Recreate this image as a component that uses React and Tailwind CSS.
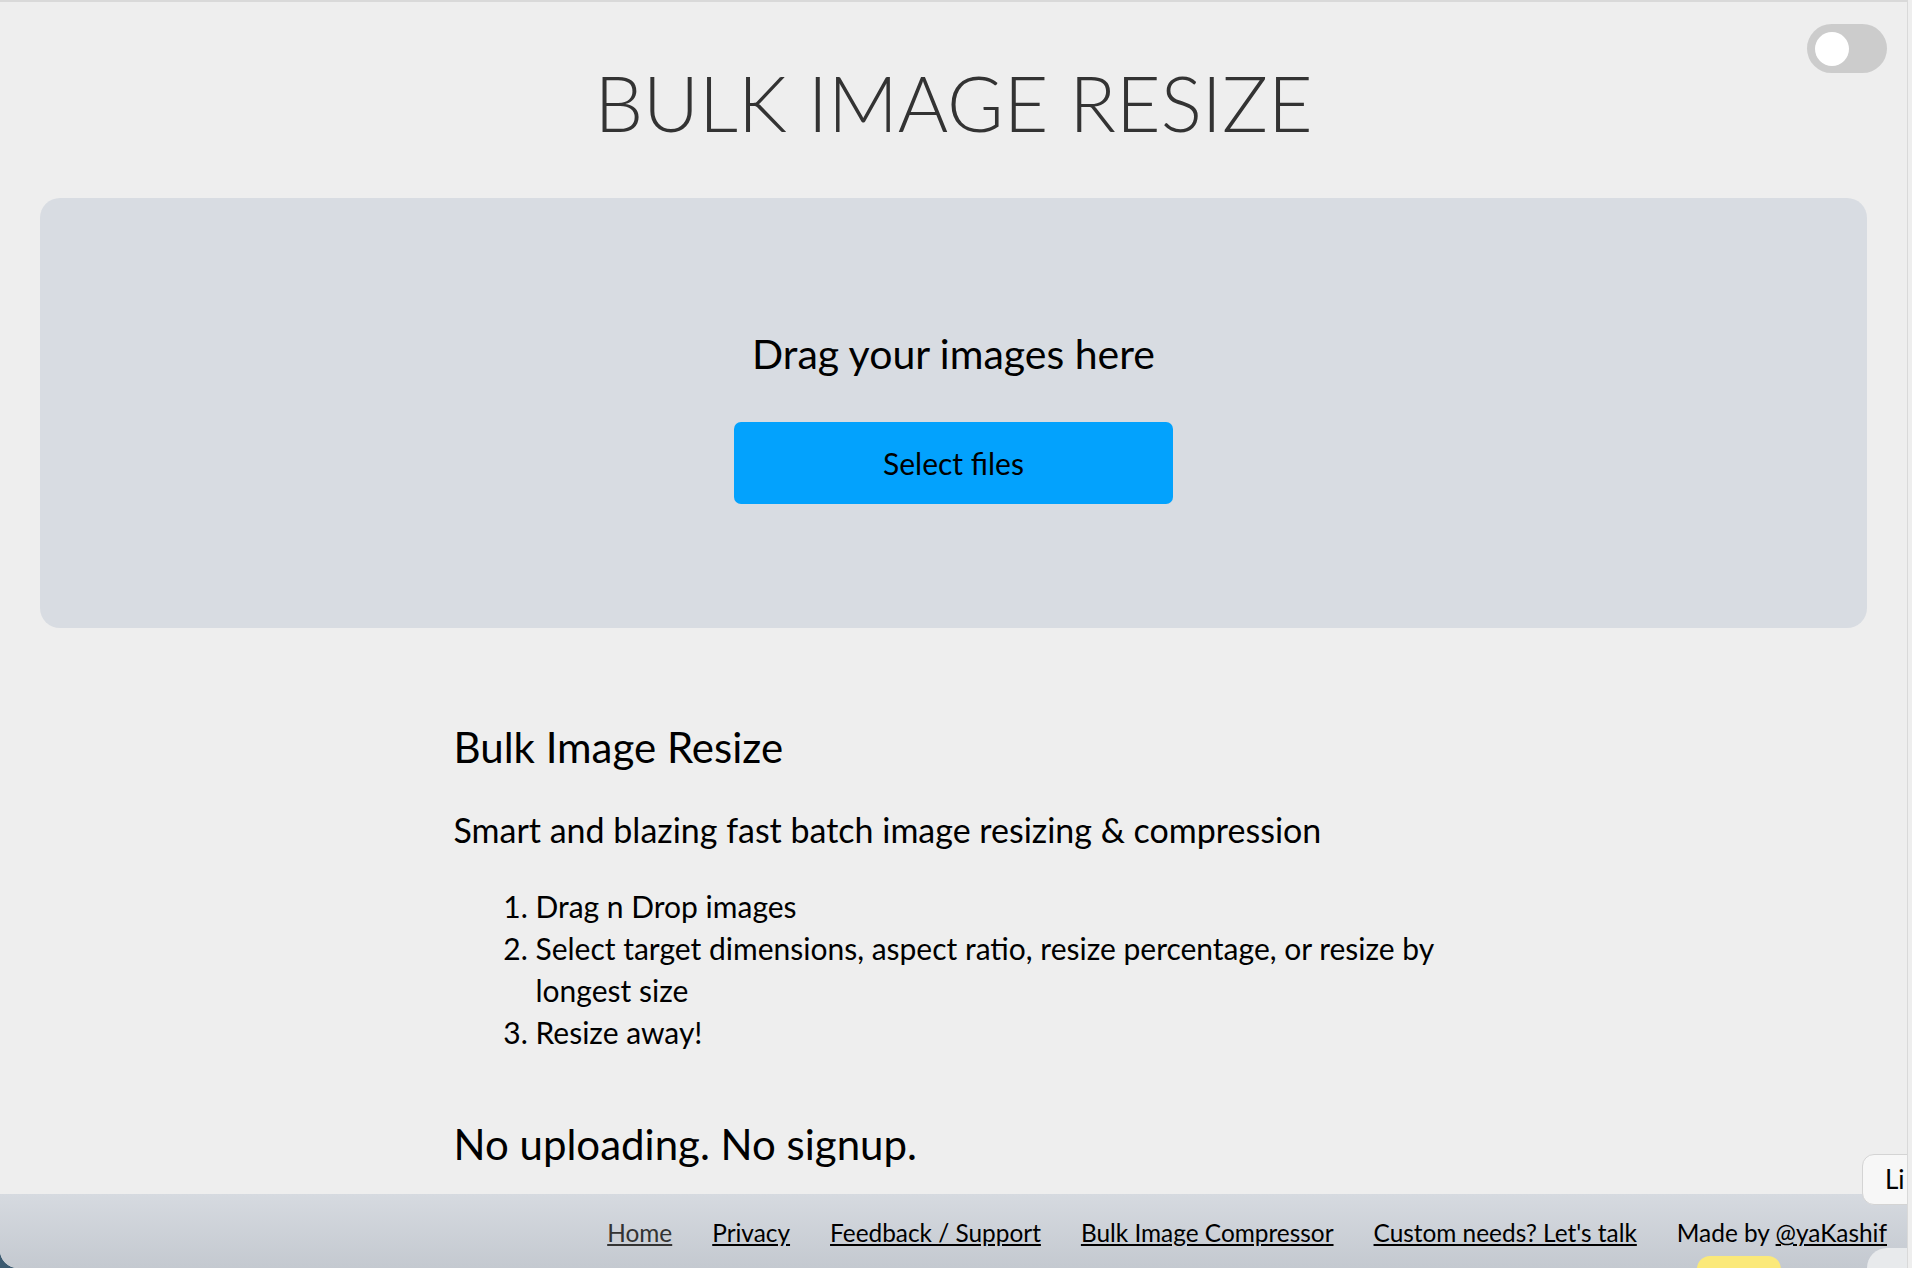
export default function App() {
  const links = ["Home", "Privacy", "Feedback / Support", "Bulk Image Compressor", "Custom needs? Let's talk"];
  return (
    <div className="relative h-[1268px] w-[1912px] overflow-hidden bg-[#eeeeee] font-['Lato',sans-serif] text-black">
      <div className="absolute bottom-0 left-0 h-[24px] w-[24px] bg-[#3b5a70]"></div>
      <div className="relative flex h-full w-[1908px] flex-col overflow-hidden rounded-bl-[18px] border-t-2 border-r border-[#d9d9d9] bg-[#eeeeee]">
        <main className="flex-1 overflow-hidden">
          <header className="relative flex justify-center pt-[46px]">
            <h1 className="text-[77px] font-light leading-[108px] text-[#333333]">BULK IMAGE RESIZE</h1>
            <button className="absolute right-[20px] top-[22px] flex h-[49px] w-[80px] items-center rounded-full bg-[#cccccc] px-[8px]">
              <span className="h-[34px] w-[34px] rounded-full bg-white"></span>
            </button>
          </header>
          <section className="mx-[40px] mt-[42px] flex h-[430px] flex-col items-center rounded-[20px] bg-[#d8dce2] pt-[132px]">
            <p className="text-[41px] leading-[48px]">Drag your images here</p>
            <button className="mt-[44px] h-[82px] w-[439px] rounded-[7px] bg-[#03a2fd] text-[30px] text-black">Select files</button>
          </section>
          <article className="mx-auto mt-[94px] w-[1000px]">
            <h2 className="text-[42px] leading-[50px]">Bulk Image Resize</h2>
            <p className="mt-[37px] text-[34px] leading-[42px]">Smart and blazing fast batch image resizing &amp; compression</p>
            <ol className="mt-[34px] list-decimal pl-[82px] text-[30px] leading-[42px]">
              <li>Drag n Drop images</li>
              <li>Select target dimensions, aspect ratio, resize percentage, or resize by longest size</li>
              <li>Resize away!</li>
            </ol>
            <h2 className="mt-[66px] text-[42px] leading-[50px]">No uploading. No signup.</h2>
          </article>
        </main>
        <footer className="relative flex h-[74px] shrink-0 items-start justify-end gap-[40px] bg-gradient-to-b from-[#d6dae0] to-[#c4c9d0] pr-[20px] pt-[24px] text-[24.4px] leading-[30px]">
          {links.map((l, i) => (
            <a key={l} href="#" className={"underline " + (i === 0 ? "text-[#333333]" : "text-black")}>{l}</a>
          ))}
          <span>Made by <a href="#" className="underline">@yaKashif</a></span>
          <div className="absolute bottom-[-14px] left-[1697px] h-[26px] w-[84px] rounded-[18px] bg-[#fbe97a]"></div>
        </footer>
        <div className="absolute right-[-10px] top-[1152px] flex h-[51px] w-[55px] items-center rounded-l-[12px] border border-[#d4d4d4] bg-[#f7f7f7] pl-[22px] text-[26px]">Li</div>
        <div className="absolute bottom-[-10px] right-[-20px] h-[30px] w-[60px] rounded-t-[20px] bg-[#e8eaec]"></div>
      </div>
    </div>
  );
}
